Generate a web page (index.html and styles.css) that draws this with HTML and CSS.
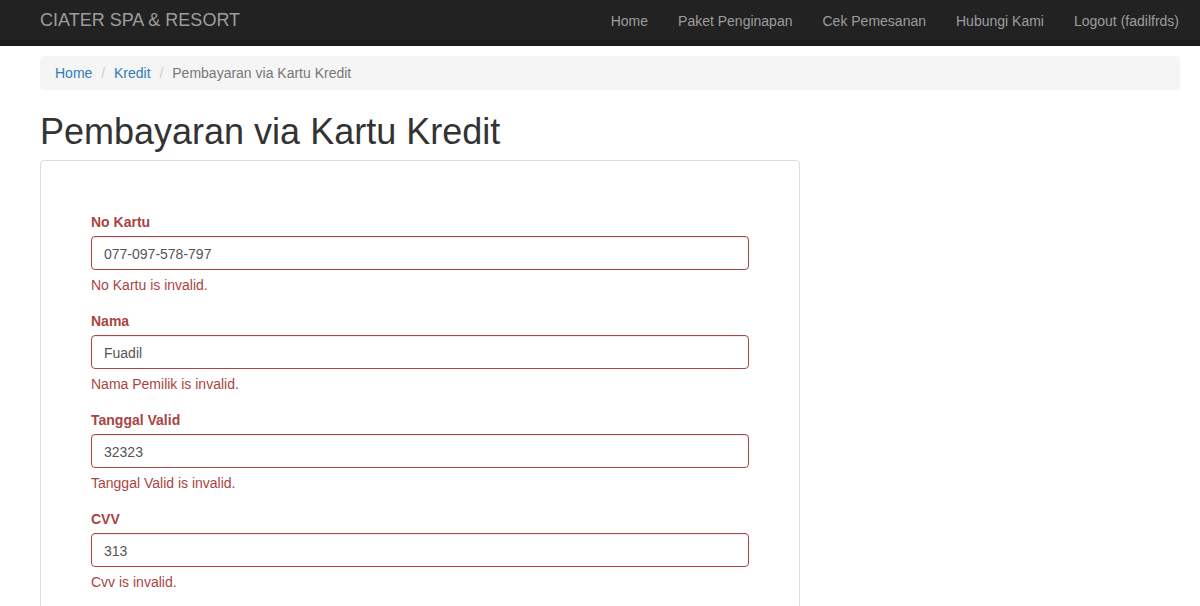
FILE: index.html
```html
<!DOCTYPE html>
<html lang="id">
<head>
<meta charset="utf-8">
<title>Pembayaran via Kartu Kredit</title>
<link rel="stylesheet" href="styles.css">
</head>
<body>
<nav class="navbar">
  <a class="brand" href="#">CIATER SPA &amp; RESORT</a>
  <ul class="nav">
    <li><a href="#">Home</a></li>
    <li><a href="#">Paket Penginapan</a></li>
    <li><a href="#">Cek Pemesanan</a></li>
    <li><a href="#">Hubungi Kami</a></li>
    <li><a href="#">Logout (fadilfrds)</a></li>
  </ul>
</nav>
<main class="container">
  <ul class="breadcrumb">
    <li><a href="#">Home</a></li>
    <li><a href="#">Kredit</a></li>
    <li class="active">Pembayaran via Kartu Kredit</li>
  </ul>
  <h1 class="title">Pembayaran via Kartu Kredit</h1>
  <div class="panel">
    <form class="form">
      <div class="form-group">
        <label class="label" for="no">No Kartu</label>
        <input class="input" id="no" type="text" value="077-097-578-797">
        <div class="help">No Kartu is invalid.</div>
      </div>
      <div class="form-group">
        <label class="label" for="nama">Nama</label>
        <input class="input" id="nama" type="text" value="Fuadil">
        <div class="help">Nama Pemilik is invalid.</div>
      </div>
      <div class="form-group">
        <label class="label" for="tgl">Tanggal Valid</label>
        <input class="input" id="tgl" type="text" value="32323">
        <div class="help">Tanggal Valid is invalid.</div>
      </div>
      <div class="form-group">
        <label class="label" for="cvv">CVV</label>
        <input class="input" id="cvv" type="text" value="313">
        <div class="help">Cvv is invalid.</div>
      </div>
    </form>
  </div>
</main>
</body>
</html>
```

FILE: styles.css
```css
* { box-sizing: border-box; }
html, body { margin: 0; padding: 0; }
body {
  font-family: "Liberation Sans", Arial, Helvetica, sans-serif;
  font-size: 14px;
  line-height: 1.42857;
  color: #333;
  background: #fff;
}
a { text-decoration: none; }

.navbar {
  height: 46px;
  background: #222;
  border-bottom: 6px solid #1b1b1b;
  display: flex;
  justify-content: space-between;
  align-items: flex-start;
  padding: 0 6px 0 40px;
}
.brand {
  font-size: 18px;
  line-height: 41px;
  color: #9d9d9d;
}
.nav {
  list-style: none;
  margin: 0;
  padding: 0;
  display: flex;
}
.nav a {
  display: block;
  padding: 0 15px;
  line-height: 43px;
  color: #9d9d9d;
}

.container {
  padding: 0 20px 0 40px;
}
.breadcrumb {
  list-style: none;
  margin: 10px 0 20px;
  padding: 8px 15px 6px;
  background: #f5f5f5;
  border-radius: 4px;
}
.breadcrumb li { display: inline-block; }
.breadcrumb li + li:before {
  content: "/\00a0";
  padding: 0 5px;
  color: #ccc;
}
.breadcrumb a { color: #337ab7; }
.breadcrumb .active { color: #777; }

.title {
  margin: 21px 0 9px;
  padding-top: 1px;
  font-size: 36px;
  font-weight: 500;
  line-height: 39px;
  color: #333;
}

.panel {
  width: 760px;
  border: 1px solid #ddd;
  border-radius: 4px;
  padding: 50px 50px 60px;
}
.form-group { margin-bottom: 16px; }
.label {
  display: block;
  padding-top: 2px;
  line-height: 18px;
  margin-bottom: 5px;
  font-weight: bold;
  color: #a94442;
}
.input {
  display: block;
  width: 100%;
  height: 34px;
  padding: 7px 12px 5px;
  font-family: inherit;
  font-size: 14px;
  line-height: 20px;
  color: #555;
  background: #fff;
  border: 1px solid #a94442;
  border-radius: 4px;
  box-shadow: inset 0 1px 1px rgba(0,0,0,.075);
  outline: none;
}
.help {
  margin: 6px 0 10px;
  line-height: 18px;
  color: #a94442;
}
```
